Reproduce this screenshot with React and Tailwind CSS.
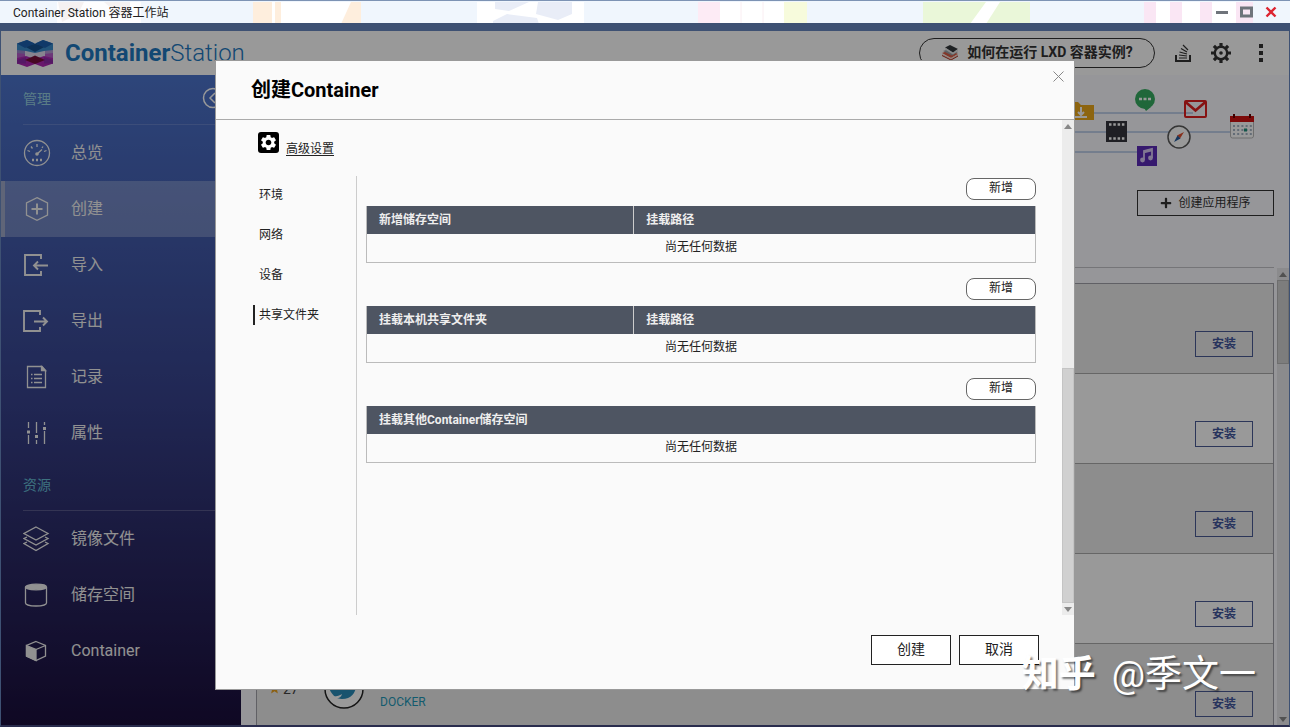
import { FaPlus } from 'react-icons/fa'
import { MdSettings, MdStar } from 'react-icons/md'

const manageItems = [
  { label: '总览', icon: GaugeIcon },
  { label: '创建', icon: CreateIcon, active: true },
  { label: '导入', icon: ImportIcon },
  { label: '导出', icon: ExportIcon },
  { label: '记录', icon: LogIcon },
  { label: '属性', icon: SlidersIcon },
]

const resourceItems = [
  { label: '镜像文件', icon: LayersIcon },
  { label: '储存空间', icon: VolumeIcon },
  { label: 'Container', icon: BoxIcon },
]

const tabs = ['环境', '网络', '设备', '共享文件夹']

const tables = [
  ['新增储存空间', '挂载路径'],
  ['挂载本机共享文件夹', '挂载路径'],
  ['挂载其他Container储存空间'],
]

function SideIcon({ children }) {
  return (
    <svg width="28" height="28" viewBox="0 0 28 28" fill="none" stroke="currentColor" strokeWidth="1.3" className="shrink-0">
      {children}
    </svg>
  )
}

function GaugeIcon() {
  return (
    <SideIcon>
      <circle cx="14" cy="14" r="12.5" />
      <path d="M14 5v3M8 7.5l1.5 2M20 7.5l-1 1.5M4.5 11.5l2.5 1M23.5 11.5l-2.5 1M14 15l5-4.5" />
      <circle cx="14" cy="15" r="1.8" fill="currentColor" stroke="none" />
      <path d="M9 21h2M13 21h2M17 21h2" strokeWidth="2.4" />
    </SideIcon>
  )
}

function CreateIcon() {
  return (
    <SideIcon>
      <path d="M14 2.7l10.500 5.300v12L14 25.300 3.500 20V8z" />
      <path d="M14 8.500v11M8.500 14h11" strokeWidth="2" />
    </SideIcon>
  )
}

function ImportIcon() {
  return (
    <SideIcon>
      <path d="M18 8V4H2v20h16v-4M25 14.500H11M15 10.500l-4 4 4 4" strokeWidth="1.9" />
    </SideIcon>
  )
}

function ExportIcon() {
  return (
    <SideIcon>
      <path d="M17 8V4H1v20h16v-4M11 14.500h13M20 10.500l4 4-4 4" strokeWidth="1.9" />
    </SideIcon>
  )
}

function LogIcon() {
  return (
    <SideIcon>
      <path d="M4.500 3.500h14.500l3.500 4v17h-18z" />
      <path d="M18.500 3.500v4h4z" fill="currentColor" />
      <path d="M8 11.500h1.500M11 11.500h8M8 15.500h1.500M11 15.500h8M8 19.500h1.500M11 19.500h8" />
    </SideIcon>
  )
}

function SlidersIcon() {
  return (
    <SideIcon>
      <path d="M5.500 3v6M5.500 16v9M13.500 3v11M13.500 21v4M21.500 3v3M21.500 12v13" />
      <path d="M4 13h3M12 17.500h3M20 9.500h3" strokeWidth="3" />
    </SideIcon>
  )
}

function LayersIcon() {
  return (
    <SideIcon>
      <path d="M13 2l12 6.500-12 6.500L1 8.500z" />
      <path d="M4 12l-3 1.500L13 20l12-6.500-3-1.500M4 17l-3 1.500L13 25.500l12-7-3-1.500" />
    </SideIcon>
  )
}

function VolumeIcon() {
  return (
    <SideIcon>
      <ellipse cx="13" cy="6" rx="10.500" ry="2.800" fill="currentColor" />
      <path d="M2.500 6v16c0 1.700 4.500 3 10.500 3s10.500-1.300 10.500-3V6" />
    </SideIcon>
  )
}

function BoxIcon() {
  return (
    <SideIcon>
      <path d="M13 4.500l9.500 4V19L13 23.500 3.500 19V8.500zM13 12.500l9.500-4" />
      <path d="M3.500 8.500l9.500 4v11L3.500 19z" fill="currentColor" />
    </SideIcon>
  )
}

function Logo() {
  return (
    <svg width="36" height="27" viewBox="0 0 36 27" className="shrink-0">
      <path d="M0 6l9 3v9l-9 4z" fill="#9a86cc" />
      <path d="M36 6l-9 3v9l9 4z" fill="#b39ad4" />
      <path d="M0 13l9 1v6l-9 4zM36 13l-9 1v6l9 4z" fill="#b45ac8" />
      <path d="M8 8l10 4 10-4v12l-10-4-10 4z" fill="#e2dcef" />
      <path d="M0 3.500L10 0l8 4 8-4 10 3.500V10l-9 1-9 2-9-2-9-1z" fill="#3b8ccc" />
      <path d="M6 5.500L18 4l12 1.500L18 12z" fill="#15508f" />
      <path d="M0 3.500L10 0l8 3.500L8 8zM36 3.500L26 0l-8 3.500L28 8z" fill="#1b60b0" />
      <path d="M0 18l9-2 9 3 9-3 9 2v5.500L26 27l-8-3-8 3-10-3.500z" fill="#b027b4" />
      <path d="M0 23.500V20l9-3v6.500zM36 23.500V20l-9-3v6.500z" fill="#8e2aa8" />
      <path d="M18 15.500l10 4.500-10 4-10-4z" fill="#76103a" />
    </svg>
  )
}

function Books() {
  return (
    <svg width="18" height="16" viewBox="0 0 18 16" className="shrink-0">
      <path d="M1 9l8-3 8 4-7 4z" fill="#d9604a" />
      <path d="M1 10l9 4 7-4v2l-7 4-9-4.500z" fill="#f0d4c8" />
      <path d="M1 11.500l9 4.500 7-4" stroke="#b03022" fill="none" />
      <path d="M2 7l7-2 8 3-6 3.500z" fill="#9ba0a5" />
      <path d="M4 3.500L9 1l8 4-5 3.500z" fill="#33373b" />
      <path d="M4 3.500l8 5 5-3.500v2l-5 3.500-8-5z" fill="#e6e6e6" />
    </svg>
  )
}

function GearIcon() {
  return (
    <svg width="20" height="20" viewBox="0 0 20 20" fill="none" stroke="currentColor">
      <circle cx="10" cy="10" r="6.2" strokeWidth="2.4" />
      <circle cx="10" cy="10" r="1.8" fill="currentColor" stroke="none" />
      <path
        d="M10 0v3.500M10 16.500V20M0 10h3.500M16.500 10H20M2.900 2.900l2.500 2.500M14.600 14.600l2.500 2.500M2.900 17.100l2.500-2.500M14.600 5.400l2.500-2.500"
        strokeWidth="3.2"
      />
    </svg>
  )
}

// App icons strung on lines at the right end of the banner
function Banner() {
  return (
    <svg width="250" height="90" viewBox="0 0 250 90">
      <path d="M0 29h182M0 48h226M0 68h140" stroke="#88a8d8" />
      <path d="M50 18h17l3 3h13v15H50z" fill="#eca81c" />
      <path d="M70 23v7M67 28l3 3 3-3M64 33h12" stroke="#fff" strokeWidth="2" fill="none" />
      <circle cx="134" cy="15" r="10" fill="#36ac62" />
      <path d="M132 22l8 1-5 4z" fill="#36ac62" />
      <path d="M128 15h3M132.500 15h3M137 15h3" stroke="#fff" strokeWidth="2.6" />
      <path d="M95 37h21v21H95z" fill="#34343c" />
      <path d="M98 40.500h16M98 54.500h16" stroke="#fff" strokeWidth="2.6" strokeDasharray="2.5 1.8" />
      <rect x="174" y="17" width="21" height="16" rx="1" stroke="#e01e1e" strokeWidth="2" fill="none" />
      <path d="M174 17.500l10.500 9 10.500-9" stroke="#e01e1e" strokeWidth="2.6" fill="none" />
      <circle cx="168" cy="53" r="11" fill="#fff" stroke="#5a5a5a" strokeWidth="1.5" />
      <path d="M173 48l-4 6.500-3-3z" fill="#e05030" />
      <path d="M163 58l3.500-6.500 3 3z" fill="#245a9c" />
      <rect x="219.500" y="33" width="23" height="21" rx="2" fill="#fff" stroke="#b8b8b8" />
      <path d="M219 32h24v6h-24z" fill="#d01212" />
      <path d="M223 30v4M239 30v4" stroke="#600" strokeWidth="2" />
      <path d="M222 42h19M222 46h19M222 50h19" stroke="#a5b5c5" strokeWidth="2" strokeDasharray="2 2.2" />
      <path d="M233 46h3" stroke="#20907a" strokeWidth="3" />
      <path d="M126 62h20v20h-20z" fill="#5a2ab8" />
      <path d="M133 76v-9l8-2v9" stroke="#d8c8f4" strokeWidth="1.8" fill="none" />
      <path d="M133 68l8-2" stroke="#d8c8f4" strokeWidth="2.5" />
      <circle cx="131.500" cy="76" r="2.4" fill="#d8c8f4" />
      <circle cx="139.500" cy="74" r="2.4" fill="#d8c8f4" />
    </svg>
  )
}

// Desktop icons that shine through the translucent title bar
function TitleGlow() {
  return (
    <svg className="absolute inset-0" width="1290" height="23" viewBox="0 0 1290 23">
      <path d="M57 1h84v22H57z" fill="#fdfdfe" />
      <path d="M58 1h26l-6 12-16 8zM104 1h26v14l-14-4z" fill="#f5f1f1" />
      <path d="M253 1h108v22H253z" fill="#feeedd" />
      <path d="M281 1h70l-10 22h-60zM272 1h3v22h-3z" fill="#fff" />
      <path d="M477 1h107v22H477z" fill="#fff" />
      <path d="M495 1h34l-20 9-14-2zM538 1h34v12l-14 6-22-6zM493 20l14-7 30 4 2 6h-46z" fill="#e9edf7" />
      <path d="M698 1h22v22h-22z" fill="#fdebf5" />
      <path d="M720 1h64v22h-64z" fill="#fff" />
      <path d="M741 1v22M763 1v22" stroke="#faeef2" />
      <path d="M784 1h23v22h-23z" fill="#f7fbdc" />
      <path d="M923 1h107v22H923z" fill="#eaf7d9" />
      <path d="M986 1h14l-14 22h-16z" fill="#fff" />
      <path d="M1144 1h109v22h-109z" fill="#fae6f4" />
      <path d="M1156 1h44v22h-44zM1212 1h24v22h-24z" fill="#fff" />
      <path d="M1170 1h12v22h-12z" fill="#fae6f4" />
    </svg>
  )
}

function TitleBar() {
  return (
    <div className="relative flex h-[23px] shrink-0 items-center justify-between overflow-hidden border-t border-[#7d93b4] bg-[#f0f6fd] px-[13px]">
      <TitleGlow />
      <span className="relative pt-0.5 text-xs text-[#222]">Container Station 容器工作站</span>
      <div className="relative flex items-center gap-3 text-[#6f747b]">
        <button type="button" aria-label="最小化">
          <svg width="12" height="12" viewBox="0 0 12 12"><path d="M0 6.500h12" stroke="currentColor" strokeWidth="3" /></svg>
        </button>
        <button type="button" aria-label="最大化">
          <svg width="13" height="12" viewBox="0 0 13 12"><path d="M1.500 2h10v8h-10z" stroke="currentColor" strokeWidth="3" fill="none" /></svg>
        </button>
        <button type="button" aria-label="关闭窗口">
          <svg width="12" height="12" viewBox="0 0 12 12"><path d="M1.500 1.500l9 9M10.500 1.500l-9 9" stroke="#dd2430" strokeWidth="2.4" /></svg>
        </button>
      </div>
    </div>
  )
}

function Header() {
  return (
    <header className="flex h-[44px] shrink-0 items-center justify-between bg-white pr-[18px] pl-4">
      <div className="flex items-center gap-3">
        <Logo />
        <span className="text-2xl text-[#1e78c0]">
          <b>Container</b>
          <span className="font-light">Station</span>
        </span>
      </div>
      <div className="flex items-center gap-5 text-[#333]">
        <button type="button" className="flex h-[30px] w-[236px] items-center justify-center gap-2 rounded-full border border-[#333] pb-0.5 text-sm font-bold">
          <Books />
          如何在运行 LXD 容器实例?
        </button>
        <button type="button" aria-label="任务">
          <svg width="16" height="20" viewBox="0 0 16 20" fill="none" stroke="currentColor">
            <path d="M1 12v6h14v-6" strokeWidth="2" />
            <path d="M4 15h8M4 12l8 1M4.500 9l7.500 2M6 5.500l6 3.500M8 2l5 5" strokeWidth="1.2" />
          </svg>
        </button>
        <button type="button" aria-label="设置"><GearIcon /></button>
        <button type="button" aria-label="更多">
          <svg width="20" height="20" viewBox="0 0 20 20"><path d="M8 1h4v4H8zM8 8h4v4H8zM8 15h4v4H8z" fill="currentColor" /></svg>
        </button>
      </div>
    </header>
  )
}

function NavItem({ item }) {
  const Icon = item.icon
  return (
    <li>
      <a
        href="#"
        className={
          item.active
            ? 'flex h-14 items-center gap-5 border-l-4 border-[#9fa9c8] bg-white/25 pl-[18px]'
            : 'flex h-14 items-center gap-5 border-l-4 border-transparent pl-[18px]'
        }
      >
        <Icon />
        {item.label}
      </a>
    </li>
  )
}

function Sidebar() {
  return (
    <nav className="w-60 shrink-0 overflow-hidden bg-linear-to-b from-[#4c74cc] via-[#37428c] to-[#1a0e3c] text-base text-[#f2f2f2]">
      <div className="ml-[22px] flex h-[50px] items-center justify-between border-b border-white/15 pr-[17px] pb-0.5 text-sm text-[#96cfe0]">
        <h2>管理</h2>
        <button type="button" aria-label="收起" className="pb-0.5 text-white">
          <svg width="22" height="22" viewBox="0 0 22 22" fill="none" stroke="currentColor" strokeWidth="1.5">
            <circle cx="11" cy="11" r="9.5" />
            <path d="M13 6l-5 5 5 5" />
          </svg>
        </button>
      </div>
      <ul>
        {manageItems.map(item => <NavItem key={item.label} item={item} />)}
      </ul>
      <h2 className="ml-[22px] flex h-[50px] items-center border-b border-white/20 pb-0.5 text-sm text-[#66bcd4]">资源</h2>
      <ul>
        {resourceItems.map(item => <NavItem key={item.label} item={item} />)}
      </ul>
    </nav>
  )
}

function DockerLogo() {
  return (
    <svg width="40" height="40" viewBox="0 0 40 40">
      <circle cx="20" cy="20" r="19" fill="#fff" stroke="#222" strokeWidth="1.5" />
      <path d="M4 16h28c0 8-5 14-14 14-6 0-11-4-14-14z" fill="#288bb8" />
      <path d="M6 27c5 1 9 0 12-2-1 4-4 5-8 4z" fill="#fff" />
    </svg>
  )
}

function AppRow({ stars, type }) {
  return (
    <li className="flex h-[90px] items-center border-b border-[#aaa] pr-5 pl-[11px] odd:bg-[#ececec] even:bg-white">
      {type && (
        <>
          <span className="flex w-14 items-center text-sm text-[#444]">
            <MdStar size={13} className="mr-0.5 text-[#e8a020]" />
            {stars}
          </span>
          <DockerLogo />
          <span className="mt-[26px] ml-4 text-xs text-[#1f98b8]">{type}</span>
        </>
      )}
      <button type="button" className="mt-[30px] ml-auto h-[26px] w-[58px] border border-[#4a5a94] text-xs font-bold text-[#42559c]">
        安装
      </button>
    </li>
  )
}

function Content() {
  return (
    <main className="flex min-w-0 flex-1 flex-col bg-[#fbfbff]">
      <section className="mr-[15px] ml-[15px] flex h-[193px] shrink-0 flex-col items-end border-b border-[#c4c4c8] pt-[9px]">
        <div className="mr-[13px]"><Banner /></div>
        <button type="button" className="mt-4 flex h-[26px] w-[137px] shrink-0 items-center justify-center gap-1.5 border border-[#333] text-xs text-[#333]">
          <FaPlus size={12} />
          创建应用程序
        </button>
      </section>
      <div className="flex min-h-0 flex-1">
        <ul className="mt-[15px] mr-[3px] ml-[15px] min-w-0 flex-1 overflow-hidden border border-b-0 border-[#a0a0a8]">
          <AppRow />
          <AppRow />
          <AppRow />
          <AppRow />
          <AppRow stars="27" type="DOCKER" />
        </ul>
        <ScrollBar className="flex w-3 shrink-0 flex-col items-center bg-[#e8e8ec] text-[#888]" thumb="h-[84px] w-full border border-[#b8b8b8] bg-[#d0d0d0]" />
      </div>
    </main>
  )
}

function ScrollBar({ className, thumb, atEnd }) {
  return (
    <div className={className}>
      <svg width="12" height="12" viewBox="0 0 12 12" className="shrink-0"><path d="M2 9h8L6 4z" fill="currentColor" /></svg>
      <div className={atEnd ? 'flex w-full flex-1 flex-col justify-end' : 'flex w-full flex-1 flex-col'}>
        <div className={thumb} />
      </div>
      <svg width="12" height="12" viewBox="0 0 12 12" className="shrink-0"><path d="M2 4h8L6 9z" fill="currentColor" /></svg>
    </div>
  )
}

function MountTable({ heads }) {
  return (
    <section className="flex flex-col items-end gap-1.5">
      <button type="button" className="h-[22px] w-[70px] rounded-[8px] border border-[#666] bg-white pb-0.5 text-xs leading-4">
        新增
      </button>
      <table className="w-full table-fixed border-separate border-spacing-0 border border-t-0 border-[#bbb] text-xs">
        <thead>
          <tr className="h-7 bg-[#4e5562] text-left text-[#eee]">
            {heads.map((head, i) => (
              <th key={head} className={i === 0 && heads.length > 1 ? 'w-2/5 border-r border-[#ccc] px-3' : 'px-3'}>
                {head}
              </th>
            ))}
          </tr>
        </thead>
        <tbody>
          <tr className="h-7">
            <td colSpan={heads.length} className="pb-0.5 text-center">尚无任何数据</td>
          </tr>
        </tbody>
      </table>
    </section>
  )
}

function CreateDialog() {
  return (
    <div role="dialog" aria-labelledby="dialog-title" className="flex h-full w-full max-w-[860px] flex-col border border-[#999] bg-[#fafafa] text-[#222]">
      <div className="flex h-[59px] shrink-0 items-center justify-between border-b border-[#aaa] pr-2.5 pl-[35px]">
        <h1 id="dialog-title" className="text-xl font-bold text-black">创建Container</h1>
        <button type="button" aria-label="关闭" className="mb-7 text-[#888]">
          <svg width="11" height="11" viewBox="0 0 11 11"><path d="M.5.5l10 10M10.5.5l-10 10" stroke="currentColor" /></svg>
        </button>
      </div>

      <div className="flex min-h-0 flex-1">
        <div className="flex min-w-0 flex-1 flex-col pl-[37px]">
          <div className="flex h-14 shrink-0 pt-3">
            <span className="ml-[5px] flex size-[21px] items-center justify-center rounded-[3px] bg-black text-white">
              <MdSettings size={19} />
            </span>
            <a href="#" className="mt-[9px] ml-[7px] text-xs underline underline-offset-2">高级设置</a>
          </div>
          <div className="flex min-h-0 flex-1">
            <ul className="flex w-[104px] shrink-0 flex-col gap-5 border-r border-[#ccc] pt-[9px] text-xs">
              {tabs.map((tab, i) => (
                <li key={tab}>
                  <a
                    href="#"
                    className={
                      i === 3
                        ? 'flex h-5 items-center border-l-2 border-[#222] pl-1'
                        : 'flex h-5 items-center border-l-2 border-transparent pl-1'
                    }
                  >
                    {tab}
                  </a>
                </li>
              ))}
            </ul>
            <div className="flex min-w-0 flex-1 flex-col gap-[15px] pt-[2px] pr-[26px] pl-[9px]">
              {tables.map(heads => <MountTable key={heads[0]} heads={heads} />)}
            </div>
          </div>
        </div>
        <ScrollBar
          atEnd
          className="flex w-3 shrink-0 flex-col items-center bg-[#ececec] text-[#888]"
          thumb="h-1/2 w-full border border-[#c4c4c4] bg-[#d0d0d0]"
        />
      </div>

      <div className="flex h-[74px] shrink-0 justify-end gap-2 pt-5 pr-[35px] text-sm">
        <button type="button" className="h-[30px] w-20 border border-[#222] bg-white pb-0.5">创建</button>
        <button type="button" className="h-[30px] w-20 border border-[#222] bg-white pb-0.5">取消</button>
      </div>
    </div>
  )
}

export default function App() {
  return (
    <div className="flex h-screen flex-col overflow-hidden font-[Roboto,'Noto_Sans_CJK_SC',sans-serif]">
      <TitleBar />
      <div className="relative flex min-h-0 flex-1 flex-col border-x border-t-8 border-b-2 border-[#6888c0] border-b-[#454a80]">
        <Header />
        <div className="flex min-h-0 flex-1">
          <Sidebar />
          <Content />
        </div>
        <div className="absolute -inset-x-px -top-2 -bottom-0.5 flex justify-center bg-black/40 pt-[37px] pb-[37px]">
          <CreateDialog />
        </div>
        <div className="pointer-events-none absolute right-[33px] bottom-8 flex items-center gap-4 text-[37px] leading-9 text-white text-shadow-[2px_2px_2px_rgb(0_0_0/0.5)]">
          <b>知乎</b>
          <span>@季文一</span>
        </div>
      </div>
    </div>
  )
}
